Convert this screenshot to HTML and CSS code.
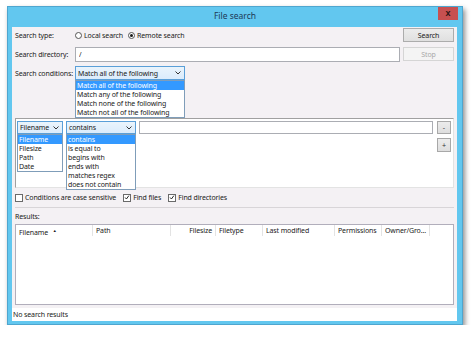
FILE: index.html
```html
<!DOCTYPE html>
<html lang="en">
<head>
    <meta charset="UTF-8">
    <meta name="viewport" content="width=device-width, initial-scale=1.0">
    <title>File search</title>
    <link rel="stylesheet" href="styles.css">
</head>
<body>
    <div class="window">
        <div class="titlebar">
            <span></span>
            <span class="title">File search</span>
            <button class="close">x</button>
        </div>
        <div class="client">
            <div class="form">
                <span class="lbl">Search type:</span>
                <div class="radios">
                    <span class="radio"></span><span>Local search</span>
                    <span class="radio checked"></span><span>Remote search</span>
                </div>
                <button class="btn">Search</button>

                <span class="lbl">Search directory:</span>
                <input type="text" class="text" value="/">
                <button class="btn" disabled>Stop</button>

                <span class="lbl">Search conditions:</span>
                <div class="combo-wrap match">
                    <div class="combo">
                        <span>Match all of the following</span>
                        <svg class="chev" width="6" height="4" viewBox="0 0 6 4"><path d="M0.5 0.5 L3 3 L5.5 0.5" fill="none" stroke="#333" stroke-width="1"/></svg>
                    </div>
                    <ul class="droplist">
                        <li class="sel">Match all of the following</li>
                        <li>Match any of the following</li>
                        <li>Match none of the following</li>
                        <li>Match not all of the following</li>
                    </ul>
                </div>
                <span></span>
            </div>

            <div class="panel">
                <div class="combo-wrap">
                    <div class="combo">
                        <span>Filename</span>
                        <svg class="chev" width="6" height="4" viewBox="0 0 6 4"><path d="M0.5 0.5 L3 3 L5.5 0.5" fill="none" stroke="#333" stroke-width="1"/></svg>
                    </div>
                    <ul class="droplist">
                        <li class="sel">Filename</li>
                        <li>Filesize</li>
                        <li>Path</li>
                        <li>Date</li>
                    </ul>
                </div>
                <div class="combo-wrap">
                    <div class="combo">
                        <span>contains</span>
                        <svg class="chev" width="6" height="4" viewBox="0 0 6 4"><path d="M0.5 0.5 L3 3 L5.5 0.5" fill="none" stroke="#333" stroke-width="1"/></svg>
                    </div>
                    <ul class="droplist">
                        <li class="sel">contains</li>
                        <li>is equal to</li>
                        <li>begins with</li>
                        <li>ends with</li>
                        <li>matches regex</li>
                        <li>does not contain</li>
                    </ul>
                </div>
                <input type="text" class="text">
                <button class="mini">-</button>
                <button class="mini plus">+</button>
            </div>

            <div class="checks">
                <span class="check"></span><span class="check-text">Conditions are case sensitive</span>
                <span class="check on"><svg width="8" height="8" viewBox="0 0 8 8"><path d="M1.5 4 L3.2 6 L6.5 1.5" fill="none" stroke="#222" stroke-width="1.3"/></svg></span><span class="check-text">Find files</span>
                <span class="check on"><svg width="8" height="8" viewBox="0 0 8 8"><path d="M1.5 4 L3.2 6 L6.5 1.5" fill="none" stroke="#222" stroke-width="1.3"/></svg></span><span class="check-text">Find directories</span>
            </div>

            <div class="separator"></div>

            <div class="results-label">Results:</div>

            <div class="results">
                <div class="header">
                    <span class="col c1">Filename <span class="sort">&#9650;</span></span>
                    <span class="col c2">Path</span>
                    <span class="col c3 right">Filesize</span>
                    <span class="col c4">Filetype</span>
                    <span class="col c5">Last modified</span>
                    <span class="col c6">Permissions</span>
                    <span class="col c7">Owner/Gro...</span>
                </div>
            </div>

            <div class="statusbar">No search results</div>
        </div>
    </div>
</body>
</html>
```

FILE: styles.css
```css
body {
    margin: 0;
    background: #ffffff;
    font-family: "Noto Sans", "Open Sans", sans-serif;
    font-size: 7px;
    letter-spacing: -0.12px;
    color: #1a1a1a;
}
.window {
    margin: 6px 0 0 7px;
    width: 456px;
    height: 319px;
    box-sizing: border-box;
    background: #62c7ef;
    border: 1px solid #4ea6cf;
    box-shadow: 2px 3px 5px rgba(0, 0, 0, 0.45);
    display: flex;
    flex-direction: column;
}
.titlebar {
    height: 20px;
    display: grid;
    grid-template-columns: 1fr auto 1fr;
    align-items: start;
}
.title {
    font-size: 8.5px;
    letter-spacing: 0;
    line-height: 17px;
    color: #1d3856;
}
.close {
    justify-self: end;
    margin-right: 4px;
    width: 20px;
    height: 13px;
    padding: 0;
    border: none;
    background: #c75050;
    color: #2a1414;
    font-family: "Liberation Sans", sans-serif;
    font-weight: bold;
    font-size: 9px;
    line-height: 11px;
}
.client {
    flex: 1;
    margin: 0 5px 3px 4px;
    background: #f4f1f4;
    display: flex;
    flex-direction: column;
}
.form {
    display: grid;
    grid-template-columns: 57px 1fr 51px;
    grid-template-rows: 15px 15px 14px;
    column-gap: 3px;
    row-gap: 4px;
    padding: 1px 3px 0;
}
.lbl {
    align-self: center;
    white-space: nowrap;
}
.radios {
    display: flex;
    align-items: center;
    gap: 2px;
}
.radio {
    width: 7px;
    height: 7px;
    box-sizing: border-box;
    border: 1px solid #555;
    border-radius: 50%;
    background: #fff;
    display: flex;
    align-items: center;
    justify-content: center;
}
.radio.checked::after {
    content: "";
    width: 3px;
    height: 3px;
    border-radius: 50%;
    background: #1a1a1a;
}
.radios span:nth-child(3) {
    margin-left: 3px;
}
.btn {
    height: 14px;
    padding: 0;
    font-family: inherit;
    font-size: 7px;
    letter-spacing: -0.12px;
    color: #1a1a1a;
    background: linear-gradient(#ececec, #e0e0e0);
    border: 1px solid #acacac;
}
.btn:disabled {
    color: #a8a8a8;
    background: #f4f4f4;
    border-color: #d5d5d5;
}
.text {
    box-sizing: border-box;
    height: 100%;
    width: 100%;
    margin: 0;
    padding: 0 3px;
    font-family: inherit;
    font-size: 7px;
    color: #1a1a1a;
    background: #fff;
    border: 1px solid #abadb3;
}
.combo-wrap {
    position: relative;
}
.match {
    width: 110px;
}
.combo {
    box-sizing: border-box;
    height: 100%;
    display: flex;
    align-items: center;
    justify-content: space-between;
    padding: 0 3px 0 2px;
    border: 1px solid #5a9fd8;
    background: linear-gradient(#eaf4fc, #dbecfc);
    white-space: nowrap;
}
.droplist {
    position: absolute;
    top: 100%;
    left: 0;
    right: 0;
    z-index: 2;
    margin: 0;
    padding: 0;
    list-style: none;
    background: #fff;
    border: 1px solid #7f9db9;
}
.droplist li {
    height: 9px;
    line-height: 9px;
    padding-left: 1px;
    white-space: nowrap;
}
.droplist li.sel {
    background: #3399ff;
    color: #fff;
}
.panel {
    margin: 38px 3px 0;
    height: 70px;
    box-sizing: border-box;
    background: #fff;
    border: 1px solid;
    border-color: #a0a0a0 #e3e3e3 #e3e3e3 #a0a0a0;
    display: grid;
    grid-template-columns: 46px 70px 1fr 14px;
    grid-template-rows: 13px 14px;
    column-gap: 3px;
    row-gap: 4px;
    padding: 2px 3px 0 1px;
    align-content: start;
}
.mini {
    margin-left: 1px;
    width: 14px;
    height: 13px;
    padding: 0;
    font-size: 7px;
    line-height: 11px;
    color: #333;
    background: linear-gradient(#ececec, #dedede);
    border: 1px solid #a8a8a8;
}
.mini.plus {
    grid-column: 4;
    height: 14px;
}
.checks {
    margin-top: 5px;
    height: 9px;
    padding-left: 3px;
    display: flex;
    align-items: center;
}
.check {
    width: 8px;
    height: 8px;
    box-sizing: border-box;
    border: 1px solid #6a6a6a;
    background: #fff;
    display: flex;
    align-items: center;
    justify-content: center;
    margin-right: 2px;
}
.check svg {
    width: 7px;
    height: 7px;
}
.check-text {
    margin-right: 7px;
}
.separator {
    margin: 5px 3px 0;
    height: 1px;
    background: #d8d5d8;
}
.results-label {
    margin: 4px 0 0 3px;
    height: 9px;
    line-height: 9px;
}
.results {
    margin: 3px 3px 0;
    height: 81px;
    box-sizing: border-box;
    background: #fff;
    border: 1px solid #b1aebb;
}
.header {
    display: flex;
    height: 11px;
    line-height: 11px;
}
.col {
    box-sizing: border-box;
    border-right: 1px solid #e3e3e3;
    padding-left: 3px;
    white-space: nowrap;
    overflow: hidden;
}
.col.right {
    text-align: right;
    padding-right: 3px;
}
.c1 { width: 77px; }
.c2 { width: 78px; }
.c3 { width: 45px; }
.c4 { width: 47px; }
.c5 { width: 72px; }
.c6 { width: 47px; }
.c7 { width: 48px; }
.sort {
    font-size: 4px;
    vertical-align: 3px;
    margin-left: 3px;
}
.statusbar {
    flex: 1;
    margin-top: 3px;
    background: #fff;
    padding-left: 1px;
    line-height: 13px;
}
```
